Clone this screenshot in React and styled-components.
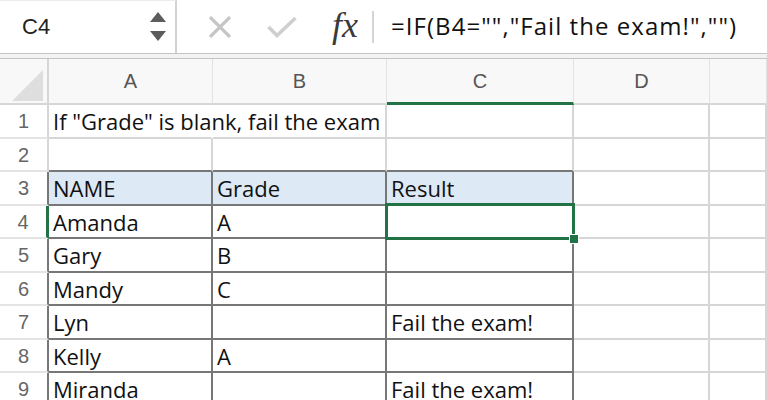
import React from "react";
import styled, { createGlobalStyle } from "styled-components";

const GlobalStyle = createGlobalStyle`
  html, body {
    margin: 0;
    padding: 0;
    background: #fff;
    overflow: hidden;
  }
`;

const CELL_FONT = `"Open Sans", "Lato", "Liberation Sans", sans-serif`;
const UI_FONT = `"Liberation Sans", "DejaVu Sans", sans-serif`;
const GREEN = "#217346";
const GRID = "#d6d6d6";
const DARK = "#777777";

const columns = ["A", "B", "C", "D", ""];

const rows = [
  ['If "Grade" is blank, fail the exam', "", ""],
  ["", "", ""],
  ["NAME", "Grade", "Result"],
  ["Amanda", "A", ""],
  ["Gary", "B", ""],
  ["Mandy", "C", ""],
  ["Lyn", "", "Fail the exam!"],
  ["Kelly", "A", ""],
  ["Miranda", "", "Fail the exam!"],
];

const Page = styled.div`
  width: 767px;
  height: 400px;
  overflow: hidden;
  background: #fff;
  display: flex;
  flex-direction: column;
`;

const Toolbar = styled.div`
  height: 53px;
  display: flex;
  align-items: stretch;
  flex-shrink: 0;
`;

const NameBox = styled.div`
  width: 177px;
  box-sizing: border-box;
  border-right: 2px solid #d2d2d2;
  border-top: 1px solid #ececec;
  display: flex;
  align-items: center;
  justify-content: space-between;
  padding: 0 9px 0 22px;
  font-family: ${UI_FONT};
  font-size: 22px;
  color: #222;
`;

const Spinner = styled.div`
  display: flex;
  flex-direction: column;
  gap: 9px;
  margin-top: -2px;
`;

const IconButton = styled.div`
  width: ${p => p.$w}px;
  display: flex;
  align-items: center;
  justify-content: center;
  margin-left: ${p => p.$gap}px;
`;

const Fx = styled.span`
  font-family: "Liberation Serif", "DejaVu Serif", serif;
  font-style: italic;
  font-size: 36px;
  color: #3a3a3a;
  margin-left: 35px;
  align-self: center;
  margin-top: -4px;
`;

const Separator = styled.div`
  width: 2px;
  height: 32px;
  background: #d4d4d4;
  align-self: center;
  margin-left: 14px;
`;

const Formula = styled.div`
  font-family: ${CELL_FONT};
  font-size: 24px;
  letter-spacing: 1.05px;
  color: #111;
  align-self: center;
  margin-left: 17px;
  margin-top: -3px;
  white-space: nowrap;
`;

const Divider = styled.div`
  height: 6px;
  box-sizing: border-box;
  border-top: 1px solid #c4c4c4;
  border-bottom: 1px solid #c4c4c4;
  background: #f3f3f3;
  flex-shrink: 0;
`;

const Sheet = styled.div`
  display: grid;
  grid-template-columns: 49px 164px 174px 187px 136px 1fr;
  grid-template-rows: 46px;
  grid-auto-rows: 33.5px;
`;

const Corner = styled.div`
  background: #f8f8f8;
  box-sizing: border-box;
  border-right: 2px solid ${GRID};
  border-bottom: 2px solid ${GRID};
  display: flex;
  align-items: flex-end;
  justify-content: flex-end;
  padding: 0 4px 2px 0;
`;

const ColHead = styled.div`
  background: #f8f8f8;
  box-sizing: border-box;
  border-right: 1px solid #e2e2e2;
  border-bottom: ${p => (p.$active ? `3px solid ${GREEN}` : `2px solid ${GRID}`)};
  display: flex;
  align-items: center;
  justify-content: center;
  padding-top: ${p => (p.$active ? 1 : 0)}px;
  font-family: ${UI_FONT};
  font-size: 20px;
  color: #555;
`;

const RowHead = styled.div`
  box-sizing: border-box;
  border-bottom: 2px solid #e4e4e4;
  border-right: ${p => p.$right};
  display: flex;
  align-items: center;
  justify-content: center;
  padding-top: 2px;
  font-family: ${UI_FONT};
  font-size: 20px;
  color: #666;
`;

const Cell = styled.div`
  position: relative;
  box-sizing: border-box;
  background: ${p => p.$fill || "transparent"};
  border-right: 2px solid ${p => p.$right};
  border-bottom: 2px solid ${p => p.$bottom};
  display: flex;
  align-items: center;
  padding: 1px 0 0 4px;
  font-family: ${CELL_FONT};
  font-size: 22px;
  color: #111;
  white-space: nowrap;
  overflow: ${p => (p.$spill || p.$selected ? "visible" : "hidden")};
  z-index: ${p => (p.$selected ? 2 : p.$spill ? 1 : 0)};
`;

const Selection = styled.div`
  position: absolute;
  left: -2px;
  top: -3px;
  right: -3px;
  bottom: -3px;
  border: 3px solid ${GREEN};
  pointer-events: none;
`;

const FillHandle = styled.div`
  position: absolute;
  right: -7px;
  bottom: -7px;
  width: 8px;
  height: 8px;
  background: ${GREEN};
  border: 1px solid #fff;
`;

const Up = () => (
  <svg width="16" height="10" viewBox="0 0 16 10">
    <polygon points="8,0 16,10 0,10" fill="#5c5c5c" />
  </svg>
);

const Down = () => (
  <svg width="16" height="10" viewBox="0 0 16 10">
    <polygon points="0,0 16,0 8,10" fill="#5c5c5c" />
  </svg>
);

const Cross = () => (
  <svg width="24" height="22" viewBox="0 0 24 22">
    <path d="M2 1 L22 21 M22 1 L2 21" stroke="#c6c6c6" strokeWidth="3.2" fill="none" />
  </svg>
);

const Check = () => (
  <svg width="30" height="22" viewBox="0 0 30 22">
    <path d="M1.5 11 L10 19.5 L28.5 2" stroke="#cfcfcf" strokeWidth="3.6" fill="none" />
  </svg>
);

const CornerMark = () => (
  <svg width="31" height="31" viewBox="0 0 31 31">
    <polygon points="31,0 31,31 0,31" fill="#dedede" />
  </svg>
);

function borderFor(r, c) {
  // r: 1-based row, c: 0..4 (A..E)
  const inTable = c <= 2;
  let right = GRID;
  let bottom = GRID;
  if (r === 1 && c === 0) right = "transparent";
  if (inTable && r >= 3) right = DARK;
  if (inTable && r >= 2) bottom = DARK;
  return { right, bottom };
}

export default function App() {
  return (
    <Page>
      <GlobalStyle />
      <Toolbar>
        <NameBox>
          <span>C4</span>
          <Spinner>
            <Up />
            <Down />
          </Spinner>
        </NameBox>
        <IconButton $w={24} $gap={31}>
          <Cross />
        </IconButton>
        <IconButton $w={30} $gap={35}>
          <Check />
        </IconButton>
        <Fx>fx</Fx>
        <Separator />
        <Formula>=IF(B4="","Fail the exam!","")</Formula>
      </Toolbar>
      <Divider />
      <Sheet>
        <Corner>
          <CornerMark />
        </Corner>
        {columns.map((col, i) => (
          <ColHead key={i} $active={col === "C"}>
            {col}
          </ColHead>
        ))}
        {rows.map((row, ri) => {
          const r = ri + 1;
          const headRight =
            r === 4 ? `3px solid ${GREEN}` : `2px solid ${r >= 3 ? DARK : GRID}`;
          return (
            <React.Fragment key={r}>
              <RowHead $right={headRight}>{r}</RowHead>
              {[0, 1, 2, 3, 4].map(c => {
                const { right, bottom } = borderFor(r, c);
                const selected = r === 4 && c === 2;
                return (
                  <Cell
                    key={c}
                    $right={right}
                    $bottom={bottom}
                    $fill={r === 3 && c <= 2 ? "#dde9f5" : undefined}
                    $spill={r === 1 && c === 0}
                    $selected={selected}
                  >
                    {row[c] || ""}
                    {selected && (
                      <Selection>
                        <FillHandle />
                      </Selection>
                    )}
                  </Cell>
                );
              })}
            </React.Fragment>
          );
        })}
      </Sheet>
    </Page>
  );
}
